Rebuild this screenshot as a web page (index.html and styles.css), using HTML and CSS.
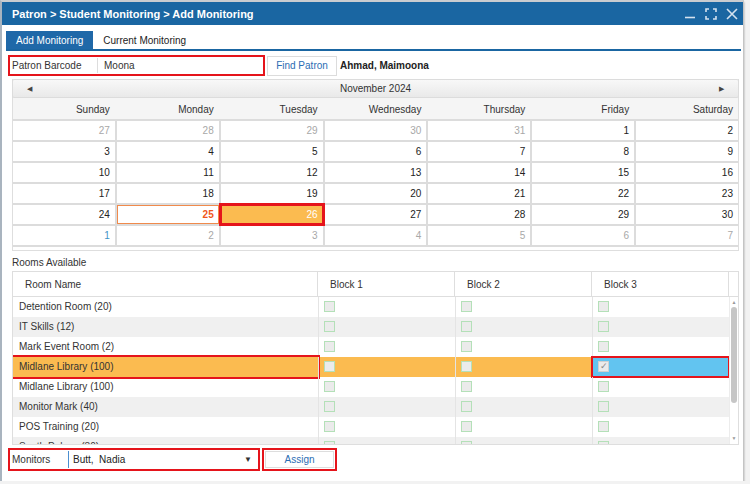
FILE: index.html
```html
<!DOCTYPE HTML>
<html>
<head>
	<title>Add Monitoring</title>
	<link rel="stylesheet" href="styles.css">
</head>
<body>
	<div class="dialog">
		<div class="titlebar">
			<span class="title">Patron &gt; Student Monitoring &gt; Add Monitoring</span>
			<div class="win-icons">
				<svg width="12" height="12" viewBox="0 0 12 12"><path d="M1 9.5h10" stroke="#d4e2ef" stroke-width="1.6"/></svg>
				<svg width="12" height="12" viewBox="0 0 12 12" fill="none" stroke="#d4e2ef" stroke-width="1.6"><path d="M1 4V1h3M8 1h3v3M11 8v3H8M4 11H1V8"/></svg>
				<svg width="12" height="12" viewBox="0 0 12 12"><path d="M1 1l10 10M11 1L1 11" stroke="#d4e2ef" stroke-width="1.6"/></svg>
			</div>
		</div>

		<div class="tabs">
			<div class="tab active">Add Monitoring</div>
			<div class="tab">Current Monitoring</div>
		</div>

		<div class="patron-row">
			<div class="redbox field">
				<span class="label">Patron Barcode</span>
				<span class="input">Moona</span>
			</div>
			<div class="button find">Find Patron</div>
			<span class="patron-name">Ahmad, Maimoona</span>
		</div>

		<div class="calendar">
			<div class="cal-nav">
				<span class="arrow">&#9664;</span>
				<span class="month">November 2024</span>
				<span class="arrow">&#9654;</span>
			</div>
			<div class="cal-head">
				<div class="dayname">Sunday</div>
				<div class="dayname">Monday</div>
				<div class="dayname">Tuesday</div>
				<div class="dayname">Wednesday</div>
				<div class="dayname">Thursday</div>
				<div class="dayname">Friday</div>
				<div class="dayname">Saturday</div>
			</div>
			<div class="cal-grid">
				<div class="day other">27</div>
				<div class="day other">28</div>
				<div class="day other">29</div>
				<div class="day other">30</div>
				<div class="day other">31</div>
				<div class="day">1</div>
				<div class="day">2</div>

				<div class="day">3</div>
				<div class="day">4</div>
				<div class="day">5</div>
				<div class="day">6</div>
				<div class="day">7</div>
				<div class="day">8</div>
				<div class="day">9</div>

				<div class="day">10</div>
				<div class="day">11</div>
				<div class="day">12</div>
				<div class="day">13</div>
				<div class="day">14</div>
				<div class="day">15</div>
				<div class="day">16</div>

				<div class="day">17</div>
				<div class="day">18</div>
				<div class="day">19</div>
				<div class="day">20</div>
				<div class="day">21</div>
				<div class="day">22</div>
				<div class="day">23</div>

				<div class="day">24</div>
				<div class="day today">25</div>
				<div class="day selected">26</div>
				<div class="day">27</div>
				<div class="day">28</div>
				<div class="day">29</div>
				<div class="day">30</div>

				<div class="day next-first">1</div>
				<div class="day other">2</div>
				<div class="day other">3</div>
				<div class="day other">4</div>
				<div class="day other">5</div>
				<div class="day other">6</div>
				<div class="day other">7</div>
			</div>
		</div>

		<div class="section-label">Rooms Available</div>

		<div class="rooms">
			<div class="rooms-head">
				<div class="col name">Room Name</div>
				<div class="col block">Block 1</div>
				<div class="col block">Block 2</div>
				<div class="col block">Block 3</div>
				<div class="col sb"></div>
			</div>
			<div class="rooms-body">
				<div class="rows">
					<div class="row">
						<div class="col name">Detention Room (20)</div>
						<div class="col block"><span class="cb"></span></div>
						<div class="col block"><span class="cb"></span></div>
						<div class="col block"><span class="cb"></span></div>
					</div>
					<div class="row alt">
						<div class="col name">IT Skills (12)</div>
						<div class="col block"><span class="cb"></span></div>
						<div class="col block"><span class="cb"></span></div>
						<div class="col block"><span class="cb"></span></div>
					</div>
					<div class="row">
						<div class="col name">Mark Event Room (2)</div>
						<div class="col block"><span class="cb"></span></div>
						<div class="col block"><span class="cb"></span></div>
						<div class="col block"><span class="cb"></span></div>
					</div>
					<div class="row picked">
						<div class="col name boxed">Midlane Library (100)</div>
						<div class="col block"><span class="cb"></span></div>
						<div class="col block"><span class="cb"></span></div>
						<div class="col block checked boxed"><span class="cb">&#10003;</span></div>
					</div>
					<div class="row">
						<div class="col name">Midlane Library (100)</div>
						<div class="col block"><span class="cb"></span></div>
						<div class="col block"><span class="cb"></span></div>
						<div class="col block"><span class="cb"></span></div>
					</div>
					<div class="row alt">
						<div class="col name">Monitor Mark (40)</div>
						<div class="col block"><span class="cb"></span></div>
						<div class="col block"><span class="cb"></span></div>
						<div class="col block"><span class="cb"></span></div>
					</div>
					<div class="row">
						<div class="col name">POS Training (20)</div>
						<div class="col block"><span class="cb"></span></div>
						<div class="col block"><span class="cb"></span></div>
						<div class="col block"><span class="cb"></span></div>
					</div>
					<div class="row alt">
						<div class="col name">South Palace (30)</div>
						<div class="col block"><span class="cb"></span></div>
						<div class="col block"><span class="cb"></span></div>
						<div class="col block"><span class="cb"></span></div>
					</div>
				</div>
				<div class="scrollbar">
					<span class="sb-arrow">&#9650;</span>
					<div class="thumb"></div>
					<span class="sb-arrow">&#9660;</span>
				</div>
			</div>
		</div>

		<div class="bottom-row">
			<div class="redbox field">
				<span class="label monitors">Monitors</span>
				<span class="select">Butt,&nbsp; Nadia<span class="caret">&#9660;</span></span>
			</div>
			<div class="redbox assign-box">
				<div class="button assign">Assign</div>
			</div>
		</div>
	</div>
</body>
</html>
```

FILE: styles.css
```css
body {
	margin: 0;
	background-color: #f2f2f2;
	font-family: 'Liberation Sans', Arial, sans-serif;
	font-size: 10px;
	color: #333;
}

.dialog {
	width: 741px;
	height: 479px;
	background-color: #fff;
	border-top: 2px solid #c9ccd0;
	border-left: 2px solid #a9b4bf;
	border-right: 1px solid #c4c4c4;
	box-shadow: 0 2px 2px rgba(0, 0, 0, 0.35);
	display: flex;
	flex-direction: column;
}

.titlebar {
	height: 23px;
	background-color: #1a66a2;
	display: flex;
	align-items: center;
	justify-content: space-between;
	padding: 0 5px 0 10px;
}

.title {
	color: #fff;
	font-weight: bold;
	font-size: 11px;
}

.win-icons {
	display: flex;
	gap: 9px;
	padding-top: 1px;
}

.tabs {
	display: flex;
	margin: 6px 2px 0 4px;
	border-bottom: 2px solid #1a66a2;
}

.tab {
	height: 18px;
	line-height: 19px;
	padding: 0 10px;
	color: #222;
}

.tab.active {
	background-color: #1f68a8;
	color: #fff;
}

.patron-row {
	display: flex;
	align-items: center;
	margin: 4px 0 0 6px;
	height: 21px;
}

.redbox {
	border: 2px solid #e5141b;
	box-sizing: border-box;
}

.field {
	display: flex;
	align-items: center;
	height: 21px;
	width: 257px;
}

.label {
	width: 85px;
	padding-left: 2px;
	color: #333;
}

.label.monitors {
	width: 56px;
}

.input {
	flex: 1;
	height: 15px;
	line-height: 16px;
	border-left: 1px solid #ddd;
	padding-left: 6px;
}

.button {
	border: 1px solid #dcdcdc;
	color: #2b6db3;
	text-align: center;
	background-color: #fff;
}

.find {
	width: 68px;
	height: 18px;
	line-height: 18px;
	margin-left: 2px;
}

.patron-name {
	font-weight: bold;
	color: #222;
	margin-left: 3px;
}

.calendar {
	margin: 3px 4px 0 10px;
	border: 1px solid #dedede;
	border-top: none;
	padding-bottom: 3px;
}

.cal-nav {
	height: 17px;
	display: flex;
	align-items: center;
	justify-content: space-between;
	padding: 0 14px;
	background: linear-gradient(#f8f8f8, #e9e9e9);
	border: 1px solid #dcdcdc;
	border-radius: 2px;
	margin: 0 -1px;
}

.arrow {
	font-size: 7px;
	color: #444;
}

.month {
	color: #333;
}

.cal-head,
.cal-grid {
	display: grid;
	grid-template-columns: repeat(7, 1fr);
	column-gap: 2px;
}

.cal-head {
	background-color: #f5f5f5;
	height: 21px;
}

.dayname {
	text-align: right;
	padding-right: 5px;
	line-height: 23px;
	color: #333;
}

.cal-grid {
	grid-auto-rows: 19px;
	row-gap: 2px;
	background-color: #dcdcdc;
	border-top: 2px solid #dcdcdc;
	border-bottom: 2px solid #dcdcdc;
}

.day {
	background-color: #fff;
	text-align: right;
	padding-right: 5px;
	line-height: 19px;
	color: #222;
}

.day.other {
	color: #a8a8a8;
}

.day.next-first {
	color: #3f93c6;
}

.day.today {
	box-shadow: inset 0 0 0 1px #f08a4b;
	color: #f0561a;
	font-weight: bold;
}

.day.selected {
	background-color: #fbbb50;
	color: #fff;
	box-shadow: 0 0 0 2px #e5141b, inset 0 0 0 1px #e5141b;
	position: relative;
}

.section-label {
	margin: 4px 0 0 10px;
	height: 15px;
	line-height: 15px;
	color: #333;
}

.rooms {
	margin: 1px 4px 0 10px;
	border: 1px solid #dedede;
}

.rooms-head {
	display: flex;
	height: 24px;
	border-bottom: 1px solid #dedede;
}

.col {
	box-sizing: border-box;
}

.col.name {
	width: 305px;
	padding-left: 6px;
}

.rooms-head .col {
	line-height: 25px;
	border-right: 1px solid #dedede;
}

.rooms-head .col.name {
	padding-left: 12px;
}

.rooms-head .col.block {
	padding-left: 12px;
}

.col.block {
	width: 137px;
	border-left: 1px solid #e4e4e4;
	padding-left: 5px;
}

.rooms-head .col.block {
	border-left: none;
}

.rooms-head .col.sb {
	width: 8px;
	border-right: none;
}

.rooms-body {
	display: flex;
	height: 147px;
	overflow: hidden;
}

.rows {
	width: 716px;
}

.row {
	display: flex;
	height: 20px;
	align-items: center;
}

.row .col {
	height: 20px;
	line-height: 20px;
}

.row.alt {
	background-color: #f0f0f0;
}

.row.picked {
	background-color: #fbbb50;
}

.boxed {
	outline: 2px solid #e5141b;
	outline-offset: -1px;
}

.row .col.name.boxed {
	outline-offset: 0px;
}

.cb {
	display: inline-block;
	width: 9px;
	height: 9px;
	border: 1px solid #b4e0b8;
	background-color: #ebebeb;
	vertical-align: middle;
	margin-top: -2px;
	font-size: 9px;
	line-height: 9px;
	color: #888;
	text-align: center;
}

.col.checked {
	background-color: #62c4f0;
}

.col.checked .cb {
	border-color: #d0d0d0;
}

.scrollbar {
	width: 9px;
	display: flex;
	flex-direction: column;
	align-items: center;
	border-left: 1px solid #ececec;
}

.sb-arrow {
	font-size: 5px;
	color: #999;
	height: 10px;
	line-height: 10px;
}

.thumb {
	width: 6px;
	height: 96px;
	background-color: #c6c6c6;
	border-radius: 3px;
	margin-bottom: 30px;
}

.bottom-row {
	display: flex;
	align-items: center;
	margin: 3px 0 0 6px;
	gap: 2px;
}

.bottom-row .field {
	width: 252px;
	height: 23px;
}

.select {
	flex: 1;
	height: 17px;
	line-height: 18px;
	border-left: 1px solid #4b8fd0;
	padding: 0 6px 0 4px;
	display: flex;
	justify-content: space-between;
	color: #222;
}

.caret {
	font-size: 8px;
	color: #333;
}

.assign-box {
	width: 75px;
	height: 23px;
	padding: 1px;
}

.assign {
	height: 15px;
	line-height: 15px;
	border-color: #ddd;
}
```
